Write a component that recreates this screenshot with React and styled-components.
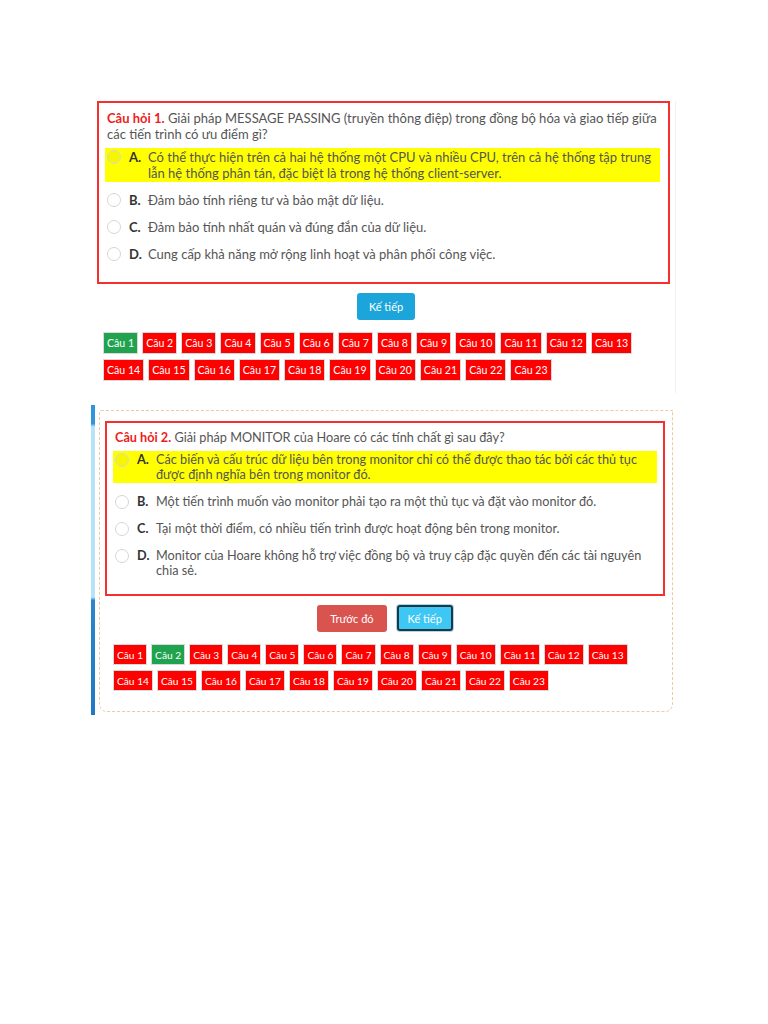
import React from "react";
import styled, { createGlobalStyle } from "styled-components";

const GlobalStyle = createGlobalStyle`
  html, body {
    margin: 0;
    padding: 0;
    background: #fff;
  }
  body {
    font-family: Lato, "Noto Sans", sans-serif;
    color: #555;
    width: 768px;
    height: 1024px;
  }
`;

const Page = styled.div`
  padding-top: 101px;
  display: flex;
  flex-direction: column;
`;

const FirstPanel = styled.div`
  margin-left: 97px;
  width: 578px;
  padding-bottom: 12px;
  border-right: 1px solid #f1f1f1;
`;

const SecondWrap = styled.div`
  display: flex;
  margin-left: 91px;
  margin-top: 12px;
`;

const ScrollBar = styled.div`
  width: 4px;
  background: linear-gradient(
    to bottom,
    #2f95dc 0%,
    #2f95dc 6%,
    #b5e3f8 7%,
    #b5e3f8 62%,
    #2a86cf 63%,
    #1f79c4 100%
  );
`;

const DashedPanel = styled.div`
  margin: 5px 0 3px 4px;
  width: 574px;
  border: 1px dashed #efc9a3;
  border-radius: 2px 0 8px 8px;
  padding: 10px 7px 20px 5px;
  box-sizing: border-box;
`;

const QuestionBox = styled.div`
  border: 2px solid #f52e2e;
  padding: ${(p) => p.$pad};
  width: ${(p) => p.$width}px;
  box-sizing: border-box;
  font-size: ${(p) => p.$fs}px;
  line-height: ${(p) => p.$lh}px;
`;

const QuestionText = styled.div`
  color: #555;
  margin-bottom: 6px;
  b {
    color: #ee1c1c;
    font-weight: 700;
  }
`;

const OptionRow = styled.div`
  display: flex;
  align-items: flex-start;
  padding: 1px 2px;
  margin-left: -2px;
  margin-bottom: ${(p) => p.$gap}px;
  background: ${(p) => (p.$hl ? "#ffff00" : "transparent")};
  color: #555;
`;

const Radio = styled.span`
  flex: none;
  width: 12px;
  height: 12px;
  border: 1px solid #d6d6d6;
  border-radius: 50%;
  background: ${(p) => (p.$hl ? "#f6f600" : "#fff")};
  margin: 1px 8px 0 0;
`;

const Letter = styled.span`
  flex: none;
  width: 19px;
  font-weight: 700;
  color: #333;
`;

const NavRow = styled.div`
  display: flex;
  justify-content: center;
  gap: 10px;
  margin: ${(p) => p.$margin};
`;

const NavButton = styled.span`
  display: inline-flex;
  align-items: center;
  justify-content: center;
  height: ${(p) => p.$h}px;
  padding: 0 ${(p) => p.$px}px;
  box-sizing: border-box;
  border-radius: 3px;
  font-size: 11px;
  color: #fff;
  background: ${(p) => p.$bg};
  border: ${(p) => (p.$focus ? "2px solid #26343c" : "none")};
  box-shadow: ${(p) => (p.$focus ? "0 0 0 1px #9ddcf6" : "none")};
`;

const ChipGrid = styled.div`
  display: flex;
  flex-wrap: wrap;
  gap: ${(p) => p.$rowGap}px 4px;
  padding-left: ${(p) => p.$indent}px;
  max-width: ${(p) => p.$max}px;
`;

const Chip = styled.span`
  display: inline-flex;
  align-items: center;
  height: ${(p) => p.$h}px;
  padding: 0 3px;
  box-sizing: border-box;
  font-size: ${(p) => p.$fs}px;
  color: #fff;
  background: ${(p) => (p.$active ? "#1fa34f" : "#ff0000")};
  border: 1px solid #d9d9d9;
`;

const questions = [
  {
    num: 1,
    text: "Giải pháp MESSAGE PASSING (truyền thông điệp) trong đồng bộ hóa và giao tiếp giữa các tiến trình có ưu điểm gì?",
    options: [
      "Có thể thực hiện trên cả hai hệ thống một CPU và nhiều CPU, trên cả hệ thống tập trung lẫn hệ thống phân tán, đặc biệt là trong hệ thống client-server.",
      "Đảm bảo tính riêng tư và bảo mật dữ liệu.",
      "Đảm bảo tính nhất quán và đúng đắn của dữ liệu.",
      "Cung cấp khả năng mở rộng linh hoạt và phân phối công việc.",
    ],
  },
  {
    num: 2,
    text: "Giải pháp MONITOR của Hoare có các tính chất gì sau đây?",
    options: [
      "Các biến và cấu trúc dữ liệu bên trong monitor chỉ có thể được thao tác bởi các thủ tục được định nghĩa bên trong monitor đó.",
      "Một tiến trình muốn vào monitor phải tạo ra một thủ tục và đặt vào monitor đó.",
      "Tại một thời điểm, có nhiều tiến trình được hoạt động bên trong monitor.",
      "Monitor của Hoare không hỗ trợ việc đồng bộ và truy cập đặc quyền đến các tài nguyên chia sẻ.",
    ],
  },
];

const letters = ["A.", "B.", "C.", "D."];

function Question({ q, width, pad, fs, lh, gap }) {
  return (
    <QuestionBox $width={width} $pad={pad} $fs={fs} $lh={lh}>
      <QuestionText>
        <b>Câu hỏi {q.num}.</b> {q.text}
      </QuestionText>
      {q.options.map((opt, i) => (
        <OptionRow key={i} $hl={i === 0} $gap={gap}>
          <Radio $hl={i === 0} />
          <Letter>{letters[i]}</Letter>
          <span>{opt}</span>
        </OptionRow>
      ))}
    </QuestionBox>
  );
}

function Chips({ active, indent, h, fs, rowGap, max }) {
  const list = Array.from({ length: 23 }, (_, i) => i + 1);
  return (
    <ChipGrid $indent={indent} $rowGap={rowGap} $max={max}>
      {list.map((n) => (
        <Chip key={n} $active={n === active} $h={h} $fs={fs}>
          Câu {n}
        </Chip>
      ))}
    </ChipGrid>
  );
}

export default function App() {
  return (
    <>
      <GlobalStyle />
      <Page>
        <FirstPanel>
          <Question
            q={questions[0]}
            width={573}
            pad="7px 8px 10px 8px"
            fs={13}
            lh={16}
            gap={9}
          />
          <NavRow $margin="9px 0 12px 0">
            <NavButton $bg="#1ba5da" $h={27} $px={12}>
              Kế tiếp
            </NavButton>
          </NavRow>
          <Chips active={1} indent={6} h={22} fs={10.6} rowGap={5} max={546} />
        </FirstPanel>
        <SecondWrap>
          <ScrollBar />
          <DashedPanel>
            <Question
              q={questions[1]}
              width={560}
              pad="7px 6px 5px 8px"
              fs={12.7}
              lh={15}
              gap={10}
            />
            <NavRow $margin="9px 0 12px 0">
              <NavButton $bg="#d9534f" $h={27} $px={13}>
                Trước đó
              </NavButton>
              <NavButton $bg="#3cc7f4" $h={26} $px={9} $focus>
                Kế tiếp
              </NavButton>
            </NavRow>
            <Chips active={2} indent={8} h={21} fs={10.2} rowGap={5} max={540} />
          </DashedPanel>
        </SecondWrap>
      </Page>
    </>
  );
}
